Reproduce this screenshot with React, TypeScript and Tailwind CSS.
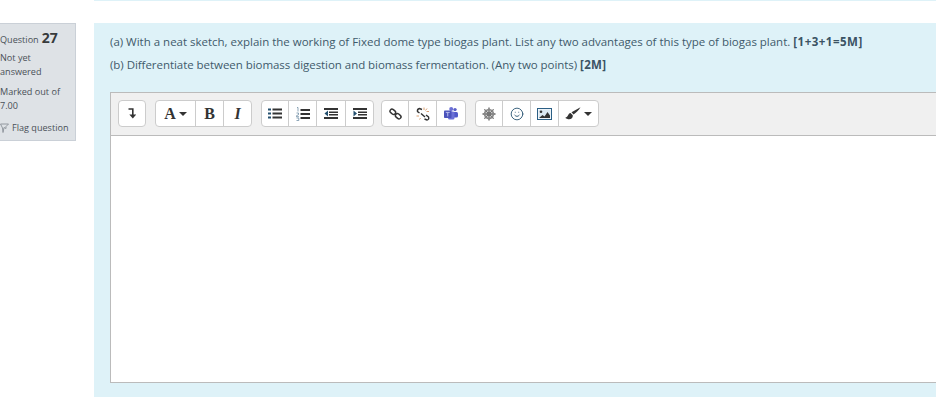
import { Smile } from "lucide-react";
import type { ReactNode } from "react";

function ToolButton({ children, width = "w-[28px]" }: { children: ReactNode; width?: string }) {
  return (
    <div className={`${width} h-full flex items-center justify-center border-l border-[#ccc] first:border-l-0 text-[#333]`}>
      {children}
    </div>
  );
}

function ToolGroup({ children }: { children: ReactNode }) {
  return (
    <div className="h-[27px] flex bg-white border border-[#ccc] rounded-[4px]">{children}</div>
  );
}

function Caret() {
  return <span className="ml-[3px] w-0 h-0 border-x-[4px] border-x-transparent border-t-[4px] border-t-[#333]" />;
}

function BulletList() {
  return (
    <svg width="14" height="11" viewBox="0 0 14 11">
      <path d="M0 0.500h3v2H0zM0 4.500h3v2H0zM0 8.500h3v2H0z" fill="#24506f" />
      <path d="M4.500 0.500h9.500v2H4.500zM4.500 4.500h9.500v2H4.500zM4.500 8.500h9.500v2H4.500z" fill="#333" />
    </svg>
  );
}

function NumberList() {
  return (
    <svg width="14" height="14" viewBox="0 0 14 14">
      <path d="M1 0.500h1v4M0.500 6h2v1.700l-2 1v1h2.500M0.500 11h2.300v2.500h-2.300" fill="none" stroke="#5d7f99" strokeWidth="0.700" />
      <path d="M4.500 2h9.500v2H4.500zM4.500 6h9.500v2H4.500zM4.500 10h9.500v2H4.500z" fill="#333" />
    </svg>
  );
}

function Indent({ flip = false }: { flip?: boolean }) {
  return (
    <svg width="14" height="11" viewBox="0 0 14 11">
      <path d="M0 0h14v2H0zM5 3.500h9v1.500H5zM5 6h9v1.500H5zM0 9h14v2H0z" fill="#333" />
      <path d={flip ? "M0.500 2.500l3.500 3-3.500 3z" : "M4 2.500L0.500 5.500 4 8.500z"} fill="#24506f" />
    </svg>
  );
}

function LinkIcon() {
  return (
    <svg width="13" height="12" viewBox="0 0 13 12" fill="none" stroke="#333" strokeWidth="1.500">
      <rect x="0.800" y="1.800" width="6" height="4" rx="2" transform="rotate(40 3.800 3.800)" />
      <rect x="6.200" y="6.200" width="6" height="4" rx="2" transform="rotate(40 9.200 8.200)" />
    </svg>
  );
}

function Unlink() {
  return (
    <svg width="14" height="14" viewBox="0 0 14 14" fill="none" stroke="#333" strokeWidth="1.400">
      <path d="M6 2.500L3.500 1.500Q1 2 1.500 4.500L3.500 6M5 6.500L9 10M10 8L12.500 10Q13.500 12.500 11 13L8.500 12" />
      <path d="M8 0.500v2.500M11 1.500L9.500 3.500M13 4.500h-2.500M0.500 9h2.500M3.500 12.500l1-1.500" stroke="#d08a50" strokeWidth="0.800" />
    </svg>
  );
}

function Teams() {
  return (
    <svg width="14" height="13" viewBox="0 0 14 13">
      <circle cx="11" cy="2.600" r="1.700" fill="#5b5fc7" />
      <circle cx="7.200" cy="2" r="2" fill="#6b70d6" />
      <rect x="9" y="5" width="5" height="5.500" rx="1.500" fill="#5059c9" />
      <rect x="4" y="4.500" width="6.500" height="8" rx="1.500" fill="#6b70d6" />
      <rect x="0" y="3.500" width="7.500" height="7.500" rx="0.800" fill="#4b53bc" />
      <path d="M1.800 5.400h3.900M3.750 5.400v4" stroke="#b9bcec" strokeWidth="1" />
    </svg>
  );
}

function Snowflake() {
  return (
    <svg width="14" height="14" viewBox="0 0 14 14">
      <g stroke="#666" strokeWidth="1.300">
        <path d="M7 0.500v13M0.500 7h13M2.400 2.400l9.200 9.200M2.400 11.600l9.200-9.200" />
      </g>
      <circle cx="7" cy="7" r="4.300" fill="none" stroke="#888" strokeWidth="1.800" />
      <circle cx="7" cy="7" r="2.200" fill="#777" />
    </svg>
  );
}

function ImageIcon() {
  return (
    <svg width="15" height="12" viewBox="0 0 15 12">
      <rect x="0.500" y="0.500" width="14" height="11" fill="#fff" stroke="#2b5f85" />
      <rect x="1.500" y="1.500" width="12" height="9" fill="#dbe8f1" />
      <path d="M2 10l3.500-3 2 1.500L10.500 4 13 7.500V10z" fill="#333" />
      <circle cx="4" cy="3.700" r="1.300" fill="#333" />
    </svg>
  );
}

function Brush() {
  return (
    <svg width="16" height="13" viewBox="0 0 16 13">
      <path d="M15.500 0.300L6.500 5.200 8.500 7.500C11 5.800 14 3 15.500 0.300z" fill="#333" />
      <path d="M5.500 6C2.800 6.200 3.500 10 0.300 10.700 2.500 13 8.300 13 7.800 8.300z" fill="#333" />
    </svg>
  );
}

function ReturnArrow() {
  return (
    <svg width="8" height="11" viewBox="0 0 8 11">
      <path d="M0.500 1h4.300v6" fill="none" stroke="#333" strokeWidth="1.600" />
      <path d="M1.300 6.500h7L4.800 10.500z" fill="#333" />
    </svg>
  );
}

function FlagOutline() {
  return (
    <svg width="9" height="10" viewBox="0 0 9 10" fill="none" stroke="#8a9199" strokeWidth="0.900">
      <path d="M0.500 1l8 0-2.500 2.500 0 2L4 4.500 3 9.500 2.500 5z" />
    </svg>
  );
}

export default function App() {
  return (
    <div className="w-[936px] h-[411px] overflow-hidden bg-white flex items-start text-[#373a3c] font-['Open_Sans','Noto_Sans',sans-serif]">
      <div className="w-[76px] h-[118px] mt-[23px] bg-[#dee2e6] border border-l-0 border-[#cad0d7] text-[9.100px] leading-[14px] text-[#4a5158]">
        <div className="h-[26px] flex items-baseline pt-[7px]">
          <span>Question</span>
          <span className="ml-[3px] text-[14px] font-bold text-[#373a3c]">27</span>
        </div>
        <div className="mt-[1px]">Not yet<br />answered</div>
        <div className="mt-[6px]">Marked out of<br />7.00</div>
        <div className="mt-[8px] flex items-center">
          <FlagOutline />
          <span className="ml-[3px]">Flag question</span>
        </div>
      </div>

      <div className="ml-[18px] flex-1 min-w-0">
        <div className="h-px bg-[#def2f8]" />
        <div className="mt-[22px] h-[374px] bg-[#def2f8] pl-[16px] pt-[11px]">
          <p className="text-[11.500px] leading-[16px] text-[#3f5a6b] whitespace-nowrap tracking-[-0.010px]">
            (a) With a neat sketch, explain the working of Fixed dome type biogas plant. List any two advantages of this type of biogas plant. <b className="tracking-[0.500px] text-[#3a5364]">[1+3+1=5M]</b>
          </p>
          <p className="mt-[7px] text-[11.500px] leading-[16px] text-[#3f5a6b] whitespace-nowrap tracking-[-0.045px]">
            (b) Differentiate between biomass digestion and biomass fermentation. (Any two points) <b className="tracking-[0.300px] text-[#3a5364]">[2M]</b>
          </p>

          <div className="mt-[19px] h-[291px] border border-r-0 border-[#bbb] bg-white flex flex-col">
            <div className="h-[43px] shrink-0 bg-[#f0f0f0] border-b border-[#bbb] flex items-start pt-[7px] pl-[7px]">
              <ToolGroup>
                <ToolButton width="w-[26px]"><ReturnArrow /></ToolButton>
              </ToolGroup>
              <div className="ml-[9px]">
                <ToolGroup>
                  <ToolButton width="w-[39px]">
                    <span className="font-['Liberation_Serif',serif] font-bold text-[16px] leading-none">A</span>
                    <Caret />
                  </ToolButton>
                  <ToolButton><span className="font-['Liberation_Serif',serif] font-bold text-[16px] leading-none">B</span></ToolButton>
                  <ToolButton><span className="font-['Liberation_Serif',serif] italic font-bold text-[16px] leading-none">I</span></ToolButton>
                </ToolGroup>
              </div>
              <div className="ml-[9px]">
                <ToolGroup>
                  <ToolButton width="w-[26px]"><BulletList /></ToolButton>
                  <ToolButton><NumberList /></ToolButton>
                  <ToolButton width="w-[29px]"><Indent /></ToolButton>
                  <ToolButton><Indent flip /></ToolButton>
                </ToolGroup>
              </div>
              <div className="ml-[7px]">
                <ToolGroup>
                  <ToolButton width="w-[26px]"><LinkIcon /></ToolButton>
                  <ToolButton><Unlink /></ToolButton>
                  <ToolButton width="w-[29px]"><Teams /></ToolButton>
                </ToolGroup>
              </div>
              <div className="ml-[9px]">
                <ToolGroup>
                  <ToolButton width="w-[26px]"><Snowflake /></ToolButton>
                  <ToolButton><Smile size={14} strokeWidth={1.500} className="text-[#24506f]" /></ToolButton>
                  <ToolButton><ImageIcon /></ToolButton>
                  <ToolButton width="w-[40px]"><Brush /><Caret /></ToolButton>
                </ToolGroup>
              </div>
            </div>
            <div className="flex-1" />
          </div>
        </div>
      </div>
    </div>
  );
}
